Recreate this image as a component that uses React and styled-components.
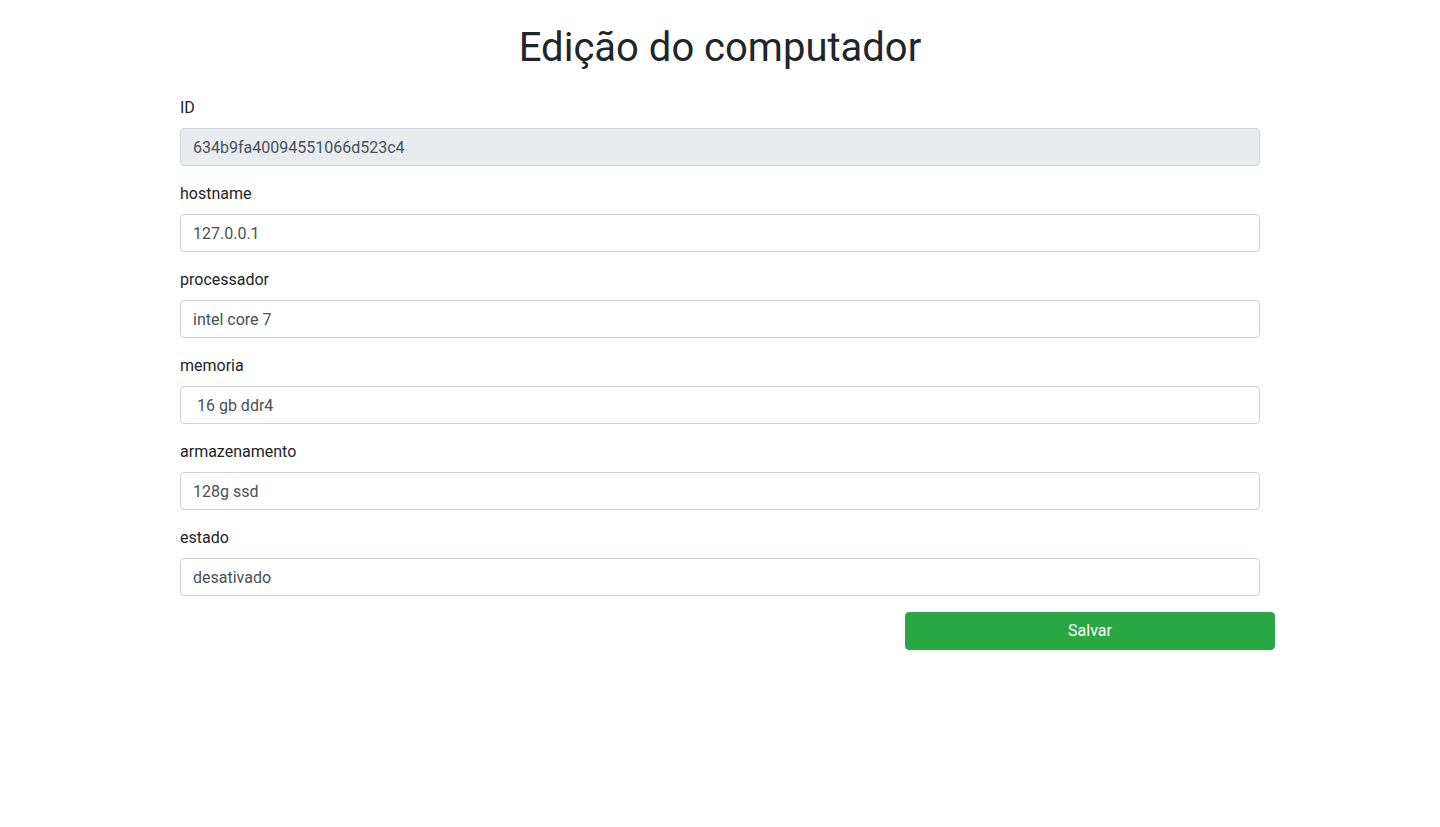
import React from "react";
import styled, { createGlobalStyle } from "styled-components";

const GlobalStyle = createGlobalStyle`
  body {
    margin: 0;
    font-family: Roboto, "Liberation Sans", Arial, sans-serif;
    font-size: 16px;
    line-height: 1.5;
    color: #212529;
    background: #fff;
  }
  * { box-sizing: border-box; }
`;

const Page = styled.div`
  width: 1110px;
  margin: 0 auto;
  padding-top: 24px;
`;

const Title = styled.h1`
  margin: 0 0 24px;
  font-size: 40px;
  font-weight: 400;
  line-height: 1.2;
  text-align: center;
`;

const Form = styled.form`
  display: flex;
  flex-direction: column;
`;

const Fields = styled.div`
  padding: 0 15px;
`;

const Group = styled.div`
  margin-bottom: 16px;
`;

const Label = styled.label`
  display: block;
  margin-bottom: 8px;
  font-size: 16px;
  line-height: 24px;
`;

const Input = styled.input`
  display: block;
  width: 100%;
  height: 38px;
  padding: 6px 12px;
  font-family: inherit;
  font-size: 16px;
  line-height: 1.5;
  color: #495057;
  background: ${(p) => (p.disabled ? "#e9ecef" : "#fff")};
  border: 1px solid #ced4da;
  border-radius: 4px;
  outline: none;
`;

const Actions = styled.div`
  display: flex;
  justify-content: flex-end;
`;

const SaveButton = styled.button`
  width: 370px;
  height: 38px;
  padding: 6px 12px;
  font-family: inherit;
  font-size: 16px;
  line-height: 1.5;
  color: #fff;
  background: #28a745;
  border: 1px solid #28a745;
  border-radius: 4px;
  cursor: pointer;
`;

const fields = [
  { name: "ID", value: "634b9fa40094551066d523c4", disabled: true },
  { name: "hostname", value: "127.0.0.1" },
  { name: "processador", value: "intel core 7" },
  { name: "memoria", value: " 16 gb ddr4" },
  { name: "armazenamento", value: "128g ssd" },
  { name: "estado", value: "desativado" },
];

export default function App() {
  return (
    <>
      <GlobalStyle />
      <Page>
        <Title>Edição do computador</Title>
        <Form onSubmit={(e) => e.preventDefault()}>
          <Fields>
            {fields.map((f) => (
              <Group key={f.name}>
                <Label htmlFor={f.name}>{f.name}</Label>
                <Input
                  id={f.name}
                  defaultValue={f.value}
                  disabled={f.disabled}
                />
              </Group>
            ))}
          </Fields>
          <Actions>
            <SaveButton type="submit">Salvar</SaveButton>
          </Actions>
        </Form>
      </Page>
    </>
  );
}
